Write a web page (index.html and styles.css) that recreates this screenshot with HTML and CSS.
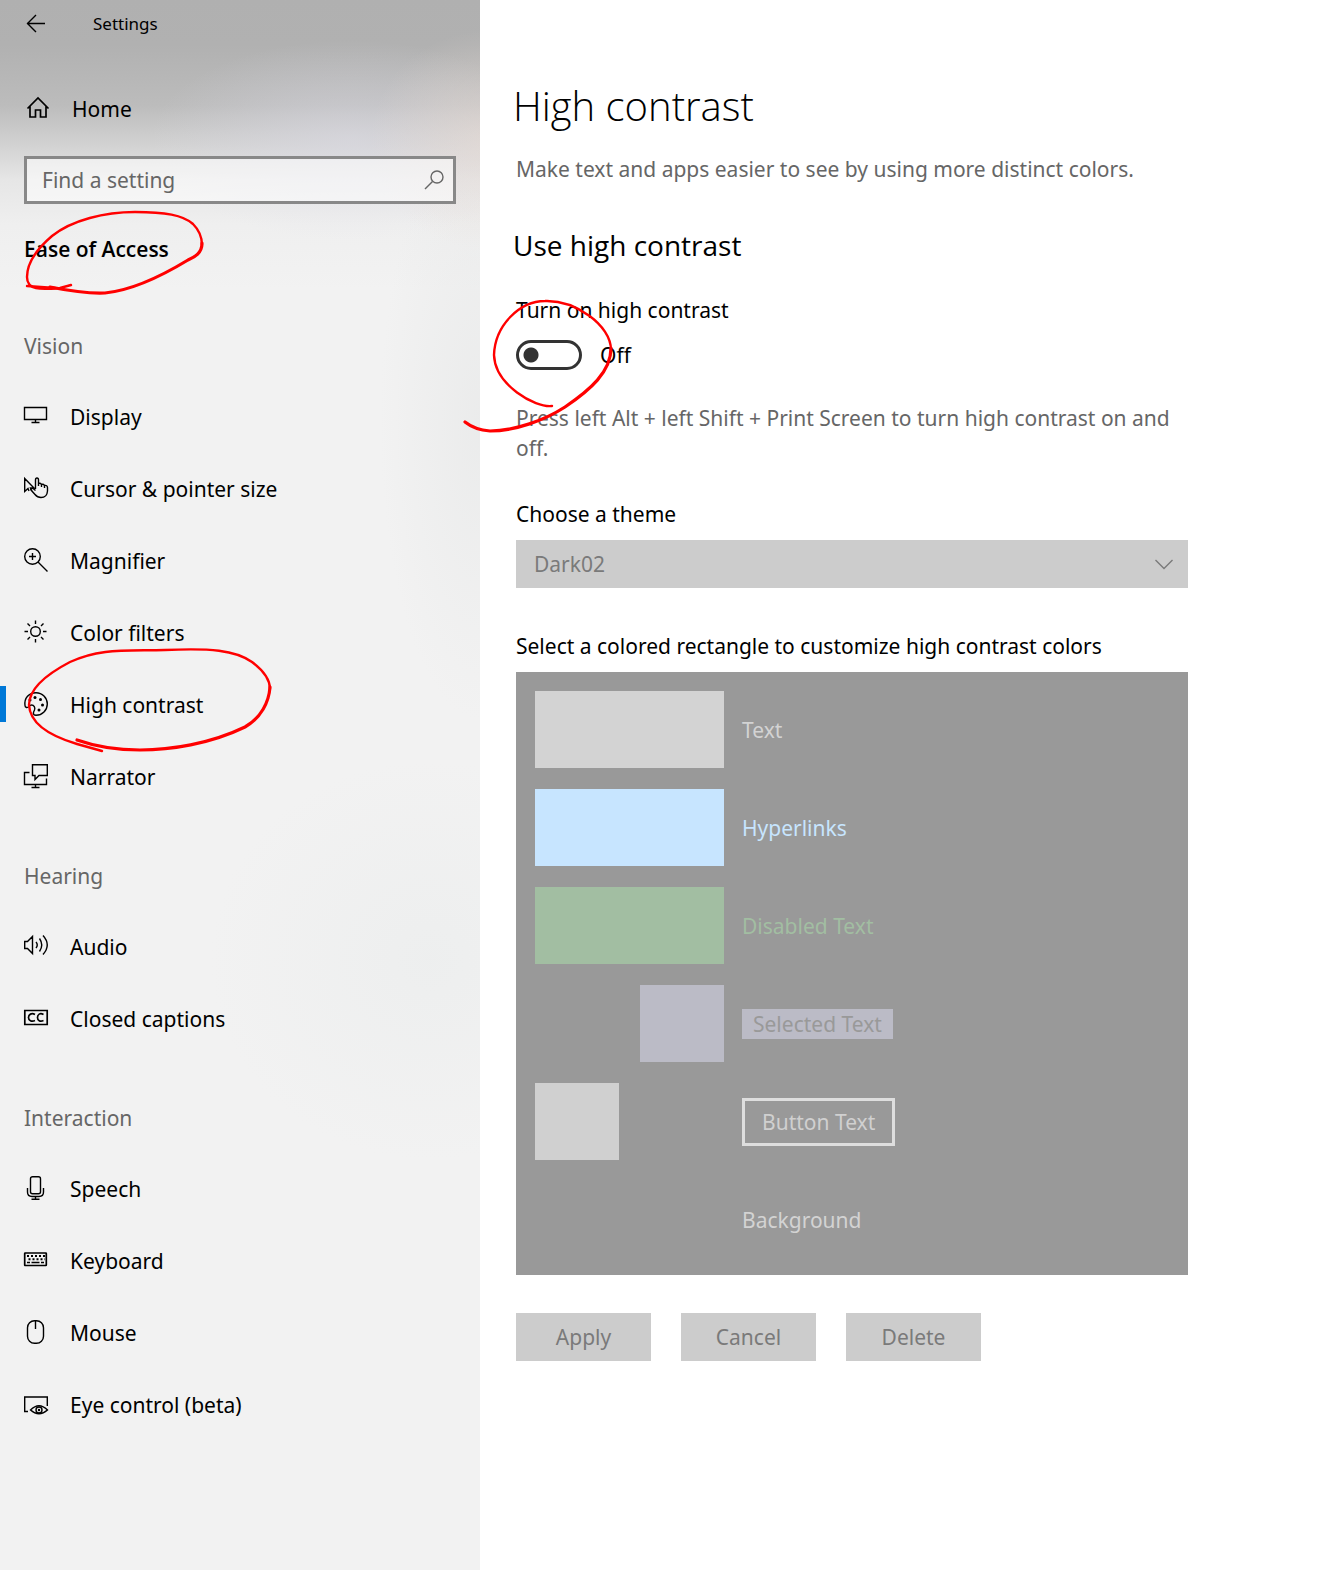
FILE: index.html
```html
<!DOCTYPE html>
<html lang="en">
<head>
<meta charset="utf-8">
<title>Settings</title>
<meta name="viewport" content="width=device-width, initial-scale=1">
<link rel="stylesheet" href="styles.css">
</head>
<body>
<div class="window">
  <aside class="sidebar">
    <header class="titlebar">
      <button class="back" type="button" aria-label="Back">
        <svg class="icon" viewBox="0 0 24 24"><path d="M3 11.500H21M12 3L3.500 11.500L12 20"/></svg>
      </button>
      <span>Settings</span>
    </header>
    <a class="nav-link home" href="#home">
      <svg class="icon home-icon" viewBox="0 0 24 24"><path class="bold" d="M1.500 12.500L12 2L22.500 12.500M4 10.500V21H9.500V14H14.500V21H20V10.500"/></svg>
      Home
    </a>
    <div class="search">
      <input class="search-input" type="search" placeholder="Find a setting" aria-label="Find a setting">
      <svg class="icon search-icon" viewBox="0 0 24 24"><circle cx="15" cy="9" r="6"/><path d="M10.500 13.500L3 21"/></svg>
    </div>
    <h2 class="category">Ease of Access</h2>
    <nav>
      <h3 class="group-title">Vision</h3>
      <ul class="group">
        <li><a class="nav-link" href="#display">
          <svg class="icon" viewBox="0 0 24 24"><path d="M.5 3.500H22.500V15.500H.5ZM11.500 15.500V18.500M7.500 18.500H15.500"/></svg>Display</a></li>
        <li><a class="nav-link" href="#cursor">
          <svg class="icon" viewBox="0 0 24 24"><path d="M5 15L4 12.500L.7 15.500V2.500L10 12H6.500L8 15M11.500 13V4Q11.500 2 13 2T14.500 4V10V7.500Q17 6.500 17.500 9V11V8.500Q20 7.500 20.500 10V12V9.500Q23.300 9 23.500 11.500V15Q23 21.500 17 21.500Q13.500 21.500 11 18.500L7 14Q6 12.500 7.500 12Q9 12 11.500 14.500"/></svg>Cursor &amp; pointer size</a></li>
        <li><a class="nav-link" href="#magnifier">
          <svg class="icon" viewBox="0 0 24 24"><circle cx="8.500" cy="8.500" r="7.800"/><path d="M14 14L23.500 23.500M8.500 5V12M5 8.500H12"/></svg>Magnifier</a></li>
        <li><a class="nav-link" href="#filters">
          <svg class="icon" viewBox="0 0 24 24"><circle cx="11.500" cy="11.500" r="4.800"/><path d="M11.500 .5V4M11.500 19V22.500M.5 11.500H4M19 11.500H22.500M3.500 3.500L6 6M17 17L19.500 19.500M3.500 19.500L6 17M17 6L19.500 3.500"/></svg>Color filters</a></li>
        <li><a class="nav-link selected" href="#contrast" aria-current="page">
          <svg class="icon" viewBox="0 0 24 24"><path d="M1 13.500C0 6 5 .7 12 .7A11.300 11.300 0 0 1 12 23.300C8 23 9.500 20 10.500 18C11.500 15.500 10 13 7.500 13C5 13 5 16 2.500 15.500Q1 15 1 13.500Z"/><g class="dots"><circle cx="6" cy="8" r="1.500"/><circle cx="11" cy="5.500" r="1.500"/><circle cx="16.500" cy="7.500" r="1.500"/><circle cx="18.500" cy="13" r="1.500"/><circle cx="15" cy="18" r="1.500"/></g></svg>High contrast</a></li>
        <li><a class="nav-link" href="#narrator">
          <svg class="icon" viewBox="0 0 24 24"><path d="M5.500 8.500H.5V20.500H22.500V14.500M11.500 20.500V23.500M7.500 23.500H15.500M8.500 .8H23.300V11.500H15L11 15.500V11.500H8.500Z"/></svg>Narrator</a></li>
      </ul>
      <h3 class="group-title">Hearing</h3>
      <ul class="group">
        <li><a class="nav-link" href="#audio">
          <svg class="icon" viewBox="0 0 24 24"><path d="M.7 7.500H3.500L8.500 2.500V19.500L3.500 14.500H.7ZM12 8Q14.500 11 12 14M15.500 4.500Q20 11 15.500 17.500M19 1.500Q27.500 11 19 20.500"/></svg>Audio</a></li>
        <li><a class="nav-link" href="#captions">
          <svg class="icon" viewBox="0 0 24 24"><path class="bold" d="M.8 4.500H23.200V18.500H.8ZM11 8.500C7.500 6.500 4.500 8.500 4.500 11.500S7.500 16 11 14.500M19.500 8.500C16 6.500 13.500 8.500 13.500 11.500S16 16 19.500 14.500"/></svg>Closed captions</a></li>
      </ul>
      <h3 class="group-title">Interaction</h3>
      <ul class="group">
        <li><a class="nav-link" href="#speech">
          <svg class="icon" viewBox="0 0 24 24"><rect x="6.500" y=".7" width="10" height="17" rx="2"/><path d="M3.500 12V16Q3.500 20.500 8 20.500H15Q19.500 20.500 19.500 16V12M11.500 20.500V23.300M7.500 23.300H15.500"/></svg>Speech</a></li>
        <li><a class="nav-link" href="#keyboard">
          <svg class="icon" viewBox="0 0 24 24"><rect class="bold" x=".7" y="5" width="21.600" height="12.500" rx=".5"/><path class="keys" d="M3 8H21M4.500 11.200H21"/><path class="bold" d="M3 14.500H6M7.500 14.500H15.500M17 14.500H20"/></svg>Keyboard</a></li>
        <li><a class="nav-link" href="#mouse">
          <svg class="icon" viewBox="0 0 24 24"><rect x="3.500" y=".7" width="16" height="22.600" rx="7"/><path d="M11.500 1V9"/></svg>Mouse</a></li>
        <li><a class="nav-link" href="#eye">
          <svg class="icon" viewBox="0 0 24 24"><path d="M4 19.500H.7V5H23.300V14M6.500 18Q15 9.500 23.500 18Q15 25.500 6.500 18Z"/><circle cx="15" cy="18" r="3"/><g class="dots"><circle cx="15" cy="18" r="1.200"/></g></svg>Eye control (beta)</a></li>
      </ul>
    </nav>
  </aside>

  <main class="content">
    <h1 class="page-title">High contrast</h1>
    <p class="lead">Make text and apps easier to see by using more distinct colors.</p>
    <h2 class="section-title">Use high contrast</h2>
    <label class="toggle-label" for="contrast-toggle">Turn on high contrast</label>
    <div class="toggle-row">
      <input class="toggle" id="contrast-toggle" type="checkbox" role="switch">
      <span>Off</span>
    </div>
    <p class="hint">Press left Alt + left Shift + Print Screen to turn high contrast on and off.</p>
    <label class="theme-label" for="theme">Choose a theme</label>
    <div class="select-box">
      <select class="theme-select" id="theme" disabled><option>Dark02</option></select>
      <svg class="icon select-icon" viewBox="0 0 24 24"><path d="M3.500 8L12 16.500L20.500 8"/></svg>
    </div>
    <p class="palette-label">Select a colored rectangle to customize high contrast colors</p>
    <div class="palette">
      <div class="palette-row"><button class="swatch wide text-color" disabled aria-label="Text color"></button><span class="name light">Text</span></div>
      <div class="palette-row"><button class="swatch wide link-color" disabled aria-label="Hyperlink color"></button><span class="name link">Hyperlinks</span></div>
      <div class="palette-row"><button class="swatch wide disabled-color" disabled aria-label="Disabled text color"></button><span class="name muted">Disabled Text</span></div>
      <div class="palette-row"><button class="swatch" disabled aria-label="Selected text color"></button><button class="swatch selected-color" disabled aria-label="Selected background color"></button><span class="name highlight">Selected Text</span></div>
      <div class="palette-row"><button class="swatch button-color" disabled aria-label="Button text color"></button><button class="swatch" disabled aria-label="Button background color"></button><span class="name outlined">Button Text</span></div>
      <div class="palette-row"><button class="swatch wide" disabled aria-label="Background color"></button><span class="name light">Background</span></div>
    </div>
    <div class="actions">
      <button class="action" type="button" disabled>Apply</button>
      <button class="action" type="button" disabled>Cancel</button>
      <button class="action" type="button" disabled>Delete</button>
    </div>
  </main>

  <svg class="ink" width="640" height="780" viewBox="0 0 640 780" aria-hidden="true">
    <path d="M71 285L60 288C40 290 27 290 27 277C27 262 38 248 52 236C72 220 105 212 135 212C165 212 183 215 193 224C200 231 202 238 202 245"/>
    <path class="thick" d="M202 243C202 253 195 257 188 260C165 274 135 290 105 293C85 294 65 290 50 287"/>
    <path d="M27 286L55 288"/>
    <path d="M102 751L77 744C50 736 30 724 29 705C29 690 45 675 70 662C100 648 125 651 165 650C210 648 235 650 252 662C264 671 270 680 270 689"/>
    <path class="thick" d="M270 687C269 702 261 718 245 727C210 744 170 750 140 750C115 750 97 747 77 740"/>
    <path d="M552 406C535 408 495 385 494 355C495 325 520 301 545 301C575 300 611 325 611 350"/>
    <path class="thick" d="M611 348C611 372 590 390 565 407C545 420 515 431 490 431C478 430 470 426 465 422"/>
  </svg>
</div>
</body>
</html>
```
FILE: styles.css
```css
* {
  box-sizing: border-box;
}

body {
  margin: 0;
  background: #fff;
  color: #000;
  font: 21px/30px "Noto Sans", "Open Sans", sans-serif;
}

h1, h2, h3, p, ul {
  margin: 0;
  padding: 0;
  font-size: inherit;
  font-weight: 400;
}

button, input, select {
  margin: 0;
  border: 0;
  border-radius: 0;
  font: inherit;
  color: inherit;
}

.window {
  position: relative;
  display: flex;
  min-height: 100vh;
}

.ink {
  position: absolute;
  top: 0;
  left: 0;
  pointer-events: none;
  fill: none;
  stroke: #f00;
  stroke-width: 2.4;
  stroke-linecap: round;
}

.ink .thick {
  stroke-width: 3.2;
}

.icon {
  flex: none;
  width: 24px;
  height: 24px;
  overflow: visible;
  fill: none;
  stroke: currentColor;
  stroke-width: 1.4;
}

.icon .bold {
  stroke-width: 1.7;
}

.icon .keys {
  stroke-width: 2;
  stroke-dasharray: 2 2;
}

.icon .dots {
  fill: currentColor;
  stroke: none;
}

/* Sidebar */

.sidebar {
  flex: none;
  width: 480px;
  padding-bottom: 48px;
  background:
    radial-gradient(ellipse 120px 110px at 490px 140px, rgba(232, 220, 213, .6), transparent),
    radial-gradient(ellipse 200px 100px at 350px 140px, rgba(220, 219, 230, .5), transparent),
    radial-gradient(ellipse 100px 300px at 480px 420px, rgba(230, 231, 231, .6), rgba(242, 242, 242, 0)),
    radial-gradient(ellipse 220px 200px at 430px 960px, rgba(234, 236, 236, .6), rgba(242, 242, 242, 0)),
    linear-gradient(#b0b0b0 0, #b1b1b1 45px, #bcbcbc 105px, #d2d2d2 145px, #e6e6e6 180px, #efefef 225px, #f2f2f2 290px);
}

.titlebar {
  display: flex;
  align-items: center;
  gap: 45px;
  height: 48px;
  padding-left: 24px;
  font-size: 17px;
}

.back {
  display: flex;
  padding: 0;
  background: none;
}

.nav-link {
  display: flex;
  align-items: center;
  gap: 22px;
  height: 72px;
  padding: 0 24px;
  color: inherit;
  text-decoration: none;
}

.nav-link .icon {
  margin-bottom: 2px;
}

.nav-link.home {
  margin-top: 25px;
  padding-left: 26px;
}

.nav-link.selected {
  background: linear-gradient(#0078d7, #0078d7) 0 17px / 6px 36px no-repeat;
}

.search {
  position: relative;
  margin: 11px 24px 0;
}

.search-input {
  display: block;
  width: 100%;
  height: 48px;
  padding: 0 48px 0 15px;
  border: 3px solid #888;
  background: rgba(255, 255, 255, .55);
  appearance: none;
}

.search-input::placeholder {
  color: #666;
  opacity: 1;
}

.search-icon {
  position: absolute;
  top: 12px;
  right: 10px;
  color: #666;
}

.category {
  margin: 30px 24px 67px;
  font-family: "Open Sans", "Noto Sans", sans-serif;
  font-weight: 600;
}

.group-title {
  padding: 0 24px;
  color: #666;
}

.group {
  margin: 20px 0 48px;
  list-style: none;
}

/* Page */

.content {
  flex: 1;
  max-width: 744px;
  padding: 78px 36px 48px;
}

.page-title,
.section-title {
  margin-left: -3px;
  font-family: "Open Sans", "Noto Sans", sans-serif;
}

.page-title {
  font-size: 40px;
  font-weight: 300;
  line-height: 56px;
}

.lead {
  margin-top: 20px;
  color: #666;
}

.section-title {
  margin-top: 41px;
  font-size: 28px;
  line-height: 40px;
}

.toggle-label {
  display: block;
  margin-top: 30px;
}

.toggle-row {
  display: flex;
  align-items: center;
  gap: 18px;
  margin-top: 15px;
}

.toggle {
  width: 66px;
  height: 30px;
  border: 3px solid #333;
  border-radius: 15px;
  background: radial-gradient(circle at 12px 12px, #333 7px, transparent 8px);
  appearance: none;
}

.hint {
  margin-top: 33px;
  color: #666;
}

.theme-label {
  display: block;
  margin-top: 36px;
}

.select-box {
  position: relative;
  margin-top: 11px;
}

.theme-select {
  display: block;
  width: 100%;
  height: 48px;
  padding: 0 48px 0 18px;
  background: #ccc;
  color: #7a7a7a;
  opacity: 1;
  appearance: none;
}

.select-icon {
  position: absolute;
  top: 12px;
  right: 12px;
  color: #7a7a7a;
}

.palette-label {
  margin-top: 43px;
}

.palette {
  display: grid;
  gap: 21px;
  margin-top: 11px;
  padding: 19px 19px 17px;
  background: #999;
}

.palette-row {
  display: grid;
  grid-template-columns: 84px 84px 1fr;
  column-gap: 21px;
  align-items: center;
}

.swatch {
  height: 77px;
  background: #999;
}

.swatch.wide {
  grid-column: span 2;
}

.swatch.text-color {
  background: #d3d3d3;
}

.swatch.link-color {
  background: #c7e5ff;
}

.swatch.disabled-color {
  background: #a2bea2;
}

.swatch.selected-color {
  background: #bbbbc6;
}

.swatch.button-color {
  background: #d0d0d0;
}

.name {
  justify-self: start;
  margin-left: -3px;
}

.name.light {
  color: #d3d3d3;
}

.name.link {
  color: #c7e5ff;
}

.name.muted {
  color: #a2bea2;
}

.name.highlight {
  padding: 0 11px;
  background: #bbbbc6;
  color: #999;
}

.name.outlined {
  padding: 6px 17px;
  border: 3px solid #dedede;
  color: #d0d0d0;
}

.actions {
  display: flex;
  gap: 30px;
  margin-top: 38px;
}

.action {
  width: 135px;
  height: 48px;
  padding: 0;
  background: #ccc;
  color: #7a7a7a;
}
```
